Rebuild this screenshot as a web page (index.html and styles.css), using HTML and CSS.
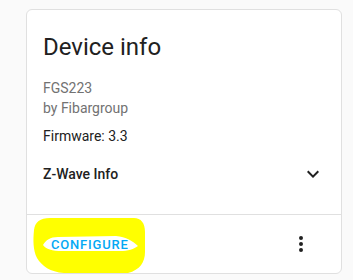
FILE: index.html
```html
<!DOCTYPE html>
<html>
<head>
<meta charset="utf-8">
<link rel="stylesheet" href="styles.css">
</head>
<body>
<div class="card">
  <div class="card-header">Device info</div>
  <div class="card-content">
    <div class="secondary">FGS223</div>
    <div class="secondary">by Fibargroup</div>
    <div class="firmware">Firmware: 3.3</div>
    <div class="panel-header">
      <span class="panel-title">Z-Wave Info</span>
      <svg class="icon" viewBox="0 0 24 24"><path d="M7.41,8.58L12,13.17L16.59,8.58L18,10L12,16L6,10L7.41,8.58Z"/></svg>
    </div>
  </div>
  <div class="card-actions">
    <button class="text-button">Configure</button>
    <button class="icon-button">
      <svg class="icon" viewBox="0 0 24 24"><path d="M12,16A2,2 0 0,1 14,18A2,2 0 0,1 12,20A2,2 0 0,1 10,18A2,2 0 0,1 12,16M12,10A2,2 0 0,1 14,12A2,2 0 0,1 12,14A2,2 0 0,1 10,12A2,2 0 0,1 12,10M12,4A2,2 0 0,1 14,6A2,2 0 0,1 12,8A2,2 0 0,1 10,6A2,2 0 0,1 12,4Z"/></svg>
    </button>
  </div>
</div>
<svg class="annotation" viewBox="0 0 353 280" width="353" height="280">
  <path fill-rule="evenodd" fill="#ffff00" d="M34,230 C35,222 40,218 50,218 L134,218 C141,218 145,223 145,232 L145,252 C145,262 140,270 128,273 L64,273 C50,272 42,266 37,258 C33,250 33,240 34,230 Z M43,245 C46,240 50,237 58,237 L116,236 C126,237 133,241 138,246 C134,249 128,251 120,251 L62,251 C52,251 46,249 43,245 Z"/>
</svg>
</body>
</html>
```
FILE: styles.css
```css
html, body {
  margin: 0;
  padding: 0;
}
body {
  background: #fafafa;
  font-family: Roboto, "Noto Sans", sans-serif;
  color: #212121;
  padding: 9px 0 0 26px;
  width: 353px;
  height: 280px;
  box-sizing: border-box;
  position: relative;
}
.card {
  width: 316px;
  box-sizing: border-box;
  background: #ffffff;
  border: 1px solid #e0e0e0;
  border-radius: 6px;
}
.card-header {
  font-size: 24px;
  line-height: 32px;
  font-weight: 400;
  padding: 21px 16px 15px;
  color: #212121;
}
.card-content {
  padding: 0 16px 16px;
}
.secondary {
  font-size: 14px;
  line-height: 20px;
  color: #727272;
}
.firmware {
  font-size: 14px;
  line-height: 20px;
  margin-top: 8px;
  color: #212121;
}
.panel-header {
  margin-top: 4px;
  height: 48px;
  display: flex;
  align-items: center;
  justify-content: space-between;
}
.panel-title {
  font-size: 14px;
  font-weight: 500;
  color: #212121;
}
.icon {
  width: 24px;
  height: 24px;
  fill: #212121;
  display: block;
}
.card-actions {
  border-top: 1px solid #e0e0e0;
  padding: 5px 16px;
  display: flex;
  align-items: center;
  justify-content: space-between;
}
.text-button {
  font-family: Roboto, sans-serif;
  font-size: 13px;
  font-weight: 500;
  letter-spacing: 0.8px;
  text-transform: uppercase;
  color: #03a9f4;
  background: none;
  border: none;
  padding: 0 8px;
  height: 36px;
  cursor: pointer;
}
.icon-button {
  width: 48px;
  height: 48px;
  padding: 12px;
  background: none;
  border: none;
  cursor: pointer;
}
.annotation {
  position: absolute;
  left: 0;
  top: 0;
  pointer-events: none;
}
```
